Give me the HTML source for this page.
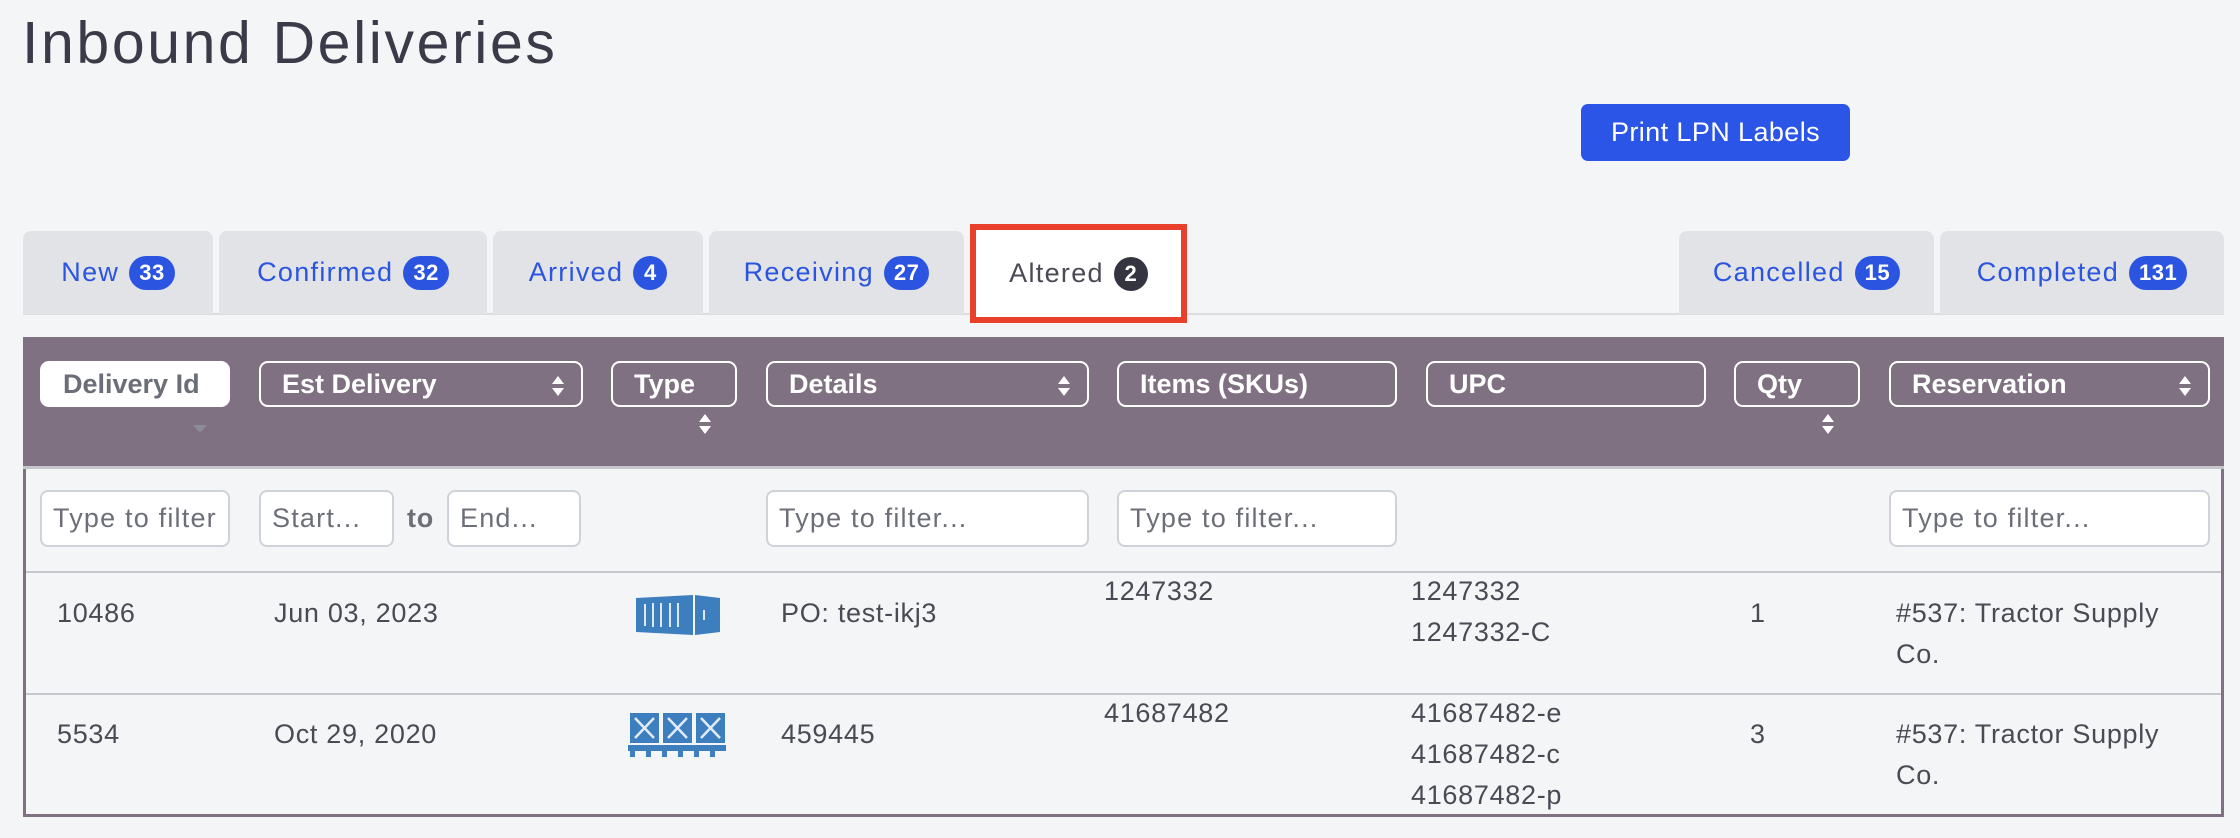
<!DOCTYPE html>
<html><head><style>
*{box-sizing:border-box;margin:0;padding:0}
body{width:2240px;height:838px;background:#f4f5f7;font-family:"Liberation Sans",sans-serif;position:relative;overflow:hidden;color:#4a4a55}
.a{position:absolute}
h1{position:absolute;left:22px;top:9px;font-size:59px;font-weight:400;color:#3a3a48;letter-spacing:2.6px}
.btn{left:1581px;top:104px;width:269px;height:57px;background:#2b55e6;color:#fff;border-radius:7px;font-size:27px;display:flex;align-items:center;justify-content:center;letter-spacing:0.4px}
.tab{top:231px;height:83px;background:#e2e3e7;border-radius:8px 8px 0 0;display:flex;align-items:center;justify-content:center;font-size:27px;color:#2b55e0;gap:10px;letter-spacing:1.3px}
.b{background:#2b55e0;color:#fff;border-radius:17px;height:34px;min-width:34px;padding:0 10px;font-size:22px;font-weight:700;display:flex;align-items:center;justify-content:center;letter-spacing:0.5px}
.pill{top:361px;height:46px;border:2px solid #fff;border-radius:9px;color:#fff;font-size:27px;font-weight:700;padding-left:21px;display:flex;align-items:center}
.sort{position:absolute;right:16px;top:13px;width:14px;height:20px}
.inp{top:490px;height:57px;background:#fff;border:2px solid #cfd2d8;border-radius:8px;font-size:27px;color:#6d6f78;padding-left:11px;display:flex;align-items:center;white-space:nowrap;overflow:hidden;letter-spacing:1.2px}
.t{font-size:27px;color:#4a4a55;line-height:41px;letter-spacing:0.7px}
</style></head><body>
<h1>Inbound Deliveries</h1>
<div class="a btn">Print LPN Labels</div>

<div class="a" style="left:23px;top:313px;width:2201px;height:2px;background:#dcdde1"></div>
<div class="a tab" style="left:23px;width:190px">New <span class="b">33</span></div>
<div class="a tab" style="left:219px;width:268px">Confirmed <span class="b">32</span></div>
<div class="a tab" style="left:493px;width:210px">Arrived <span class="b">4</span></div>
<div class="a tab" style="left:709px;width:255px">Receiving <span class="b">27</span></div>
<div class="a tab" style="left:970px;top:224px;width:217px;height:99px;background:#fff;border:6px solid #e8402a;border-radius:0;color:#4a4a55">Altered <span class="b" style="background:#343541">2</span></div>
<div class="a tab" style="left:1679px;width:255px">Cancelled <span class="b">15</span></div>
<div class="a tab" style="left:1940px;width:284px">Completed <span class="b">131</span></div>

<div class="a" style="left:23px;top:337px;width:2201px;height:480px;border:3px solid #7f7181;border-top:none;background:#f4f5f7"></div>
<div class="a" style="left:23px;top:337px;width:2201px;height:132px;background:#7f7181;border-bottom:3px solid #c5c7cd"></div>

<div class="a pill" style="left:40px;width:190px;background:#fff;color:#6b6d78">Delivery Id</div>
<div class="a" style="left:193px;top:425px;width:0;height:0;border-left:7px solid transparent;border-right:7px solid transparent;border-top:8px solid #8a8d96"></div>
<svg width="0" height="0" style="position:absolute"><defs><symbol id="s" viewBox="0 0 14 20"><path d="M7 0L13 8H1z M7 20L13 12H1z" fill="#fff"/></symbol></defs></svg>
<div class="a pill" style="left:259px;width:324px">Est Delivery<svg class="sort"><use href="#s"/></svg></div>
<div class="a pill" style="left:611px;width:126px">Type</div>
<svg class="a" style="left:698px;top:414px" width="14" height="20"><use href="#s"/></svg>
<div class="a pill" style="left:766px;width:323px">Details<svg class="sort"><use href="#s"/></svg></div>
<div class="a pill" style="left:1117px;width:280px">Items (SKUs)</div>
<div class="a pill" style="left:1426px;width:280px">UPC</div>
<div class="a pill" style="left:1734px;width:126px">Qty</div>
<svg class="a" style="left:1821px;top:414px" width="14" height="20"><use href="#s"/></svg>
<div class="a pill" style="left:1889px;width:321px">Reservation<svg class="sort"><use href="#s"/></svg></div>

<div class="a inp" style="left:40px;width:190px">Type to filter</div>
<div class="a inp" style="left:259px;width:135px">Start...</div>
<div class="a t" style="left:407px;top:498px;font-weight:700;color:#6d6f78">to</div>
<div class="a inp" style="left:447px;width:134px">End...</div>
<div class="a inp" style="left:766px;width:323px">Type to filter...</div>
<div class="a inp" style="left:1117px;width:280px">Type to filter...</div>
<div class="a inp" style="left:1889px;width:321px">Type to filter...</div>

<div class="a" style="left:26px;top:571px;width:2195px;height:2px;background:#c5c7cd"></div>
<div class="a" style="left:26px;top:693px;width:2195px;height:2px;background:#c5c7cd"></div>

<div class="a t" style="left:57px;top:593px">10486</div>
<div class="a t" style="left:274px;top:593px">Jun 03, 2023</div>
<svg class="a" style="left:636px;top:594px" width="84" height="42" viewBox="0 0 84 42"><path d="M0 4L57 1V41L0 38z" fill="#3d7ebe"/><path d="M59 1L84 4V38L59 41z" fill="#3d7ebe"/><g stroke="#dfe9f4" stroke-width="2"><path d="M9 10V32M17 9V33M25 9V33M34 9V33M42 9V33M68 16V26"/></g></svg>
<div class="a t" style="left:781px;top:593px">PO: test-ikj3</div>
<div class="a t" style="left:1104px;top:571px">1247332</div>
<div class="a t" style="left:1411px;top:571px">1247332<br>1247332-C</div>
<div class="a t" style="left:1750px;top:593px">1</div>
<div class="a t" style="left:1896px;top:593px">#537: Tractor Supply<br>Co.</div>

<div class="a t" style="left:57px;top:714px">5534</div>
<div class="a t" style="left:274px;top:714px">Oct 29, 2020</div>
<svg class="a" style="left:628px;top:713px" width="98" height="46" viewBox="0 0 98 46"><g fill="#3d7ebe"><rect x="2" y="0" width="29" height="30"/><rect x="35" y="0" width="29" height="30"/><rect x="68" y="0" width="29" height="30"/><rect x="0" y="32" width="98" height="6"/><rect x="2" y="38" width="5" height="6"/><rect x="18" y="38" width="5" height="6"/><rect x="34" y="38" width="5" height="6"/><rect x="50" y="38" width="5" height="6"/><rect x="66" y="38" width="5" height="6"/><rect x="82" y="38" width="5" height="6"/></g><g stroke="#e3ecf5" stroke-width="2.5"><path d="M7 5L26 25M26 5L7 25M40 5L59 25M59 5L40 25M73 5L92 25M92 5L73 25"/></g></svg>
<div class="a t" style="left:781px;top:714px">459445</div>
<div class="a t" style="left:1104px;top:693px">41687482</div>
<div class="a t" style="left:1411px;top:693px">41687482-e<br>41687482-c<br>41687482-p</div>
<div class="a t" style="left:1750px;top:714px">3</div>
<div class="a t" style="left:1896px;top:714px">#537: Tractor Supply<br>Co.</div>
</body></html>
